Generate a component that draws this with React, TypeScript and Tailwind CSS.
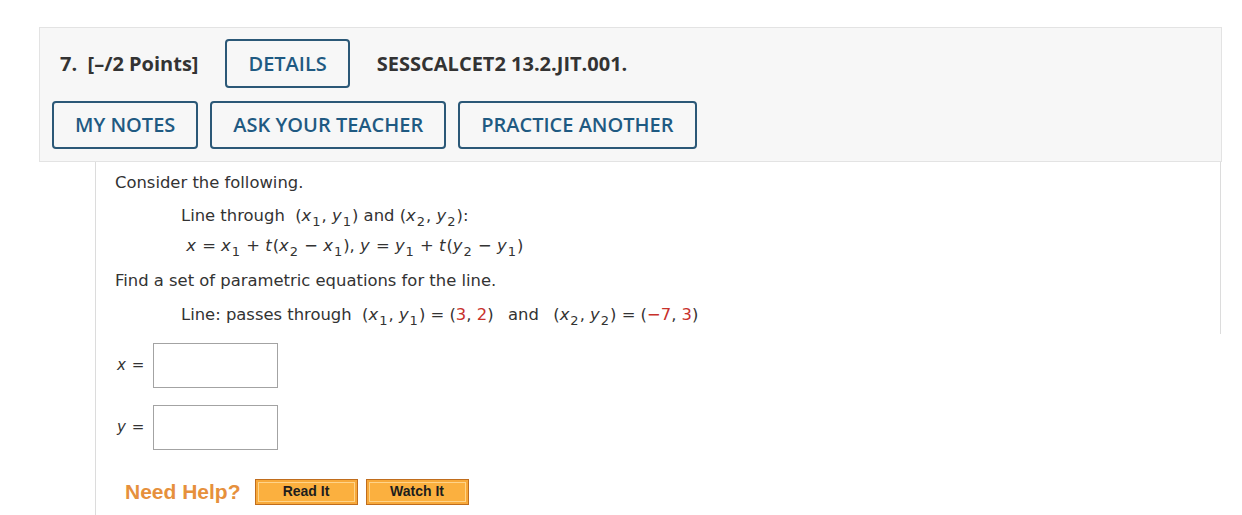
import React from 'react';

const verdana = { fontFamily: '"DejaVu Sans", Verdana, sans-serif' };

function V({ children }: { children: React.ReactNode }) {
  return <i className="italic pr-[1px]">{children}</i>;
}

function Sub({ children }: { children: React.ReactNode }) {
  return <span className="text-[13px] align-[-5px] leading-none pr-[1px]">{children}</span>;
}

function Red({ children }: { children: React.ReactNode }) {
  return <span className="text-[#c8312b]">{children}</span>;
}

function OutlineButton({ label, tall }: { label: string; tall?: boolean }) {
  return (
    <button
      className={
        (tall ? 'h-[49px]' : 'h-[48px]') +
        ' px-[21px] border-2 border-[#2b5877] rounded-[4px] text-[#1f5a82] text-[20px] font-semibold'
      }
    >
      {label}
    </button>
  );
}

function HelpButton({ label }: { label: string }) {
  return (
    <button className="w-[103px] h-[26px] border border-[#c06d1d] bg-[#f7a93a] p-[2px]">
      <span className="flex h-full w-full items-center justify-center border border-[#ffd48a] bg-[#fbb03f] text-[14px] font-bold text-[#1d1d1d]">
        {label}
      </span>
    </button>
  );
}

function Pair({ n }: { n: string }) {
  return (
    <>
      (<V>x</V><Sub>{n}</Sub>, <V>y</V><Sub>{n}</Sub>)
    </>
  );
}

export default function App() {
  return (
    <div className="w-[1242px] h-[515px] bg-white overflow-hidden pt-[27px] pl-[39px]" style={{ fontFamily: '"Open Sans", sans-serif' }}>
      <div className="w-[1183px] border border-[#e3e3e3] bg-[#f7f7f7] pt-[11px] pb-[12px] px-[12px] flex flex-col gap-[13px]">
        <div className="flex items-center gap-[27px] pl-[8px]">
          <span className="text-[20px] font-bold text-[#333]">7.&nbsp; [–/2 Points]</span>
          <OutlineButton label="DETAILS" tall />
          <span className="text-[20px] font-bold text-[#333]">SESSCALCET2 13.2.JIT.001.</span>
        </div>
        <div className="flex gap-[12px]">
          <OutlineButton label="MY NOTES" />
          <OutlineButton label="ASK YOUR TEACHER" />
          <OutlineButton label="PRACTICE ANOTHER" />
        </div>
      </div>

      <div className="ml-[56px] w-[1126px] h-[400px] border-l border-[#dcdcdc] text-[16.4px] text-[#333] flex flex-col" style={verdana}>
        <div className="border-r border-[#dcdcdc] pl-[19px] pt-[10px] h-[172px] flex flex-col leading-[22px]">
          <p>Consider the following.</p>
          <div className="pl-[66px] pt-[11px] flex flex-col gap-[7px]">
            <p>
              Line through&nbsp; <Pair n="1" /> and <Pair n="2" />:
            </p>
            <p>
              &nbsp;<V>x</V> = <V>x</V><Sub>1</Sub> + <V>t</V>(<V>x</V><Sub>2</Sub> − <V>x</V><Sub>1</Sub>), <V>y</V> = <V>y</V><Sub>1</Sub> + <V>t</V>(<V>y</V><Sub>2</Sub> − <V>y</V><Sub>1</Sub>)
            </p>
          </div>
          <p className="pt-[12px]">Find a set of parametric equations for the line.</p>
          <p className="pt-[12px] pl-[66px]">
            Line: passes through&nbsp; <Pair n="1" /> = (<Red>3</Red>, <Red>2</Red>)&nbsp; <span className="px-[4px]">and</span>&nbsp; <Pair n="2" /> = (<Red>−7</Red>, <Red>3</Red>)
          </p>
        </div>

        <div className="pl-[21px] pt-[9px] flex flex-col gap-[17px]">
          <div className="flex items-center gap-[10px]">
            <span className="w-[26px] text-[15px]"><V>x</V>&nbsp;=</span>
            <div className="w-[125px] h-[45px] border border-[#a3a3a3] bg-white" />
          </div>
          <div className="flex items-center gap-[10px]">
            <span className="w-[26px] text-[15px]"><V>y</V>&nbsp;=</span>
            <div className="w-[125px] h-[45px] border border-[#a3a3a3] bg-white" />
          </div>
        </div>

        <div className="flex items-center gap-[14px] pl-[29px] pt-[26px]" style={{ fontFamily: '"Liberation Sans", Arial, sans-serif' }}>
          <span className="text-[21px] font-bold text-[#e6903c]">Need Help?</span>
          <div className="flex gap-[8px]">
            <HelpButton label="Read It" />
            <HelpButton label="Watch It" />
          </div>
        </div>
      </div>
    </div>
  );
}
